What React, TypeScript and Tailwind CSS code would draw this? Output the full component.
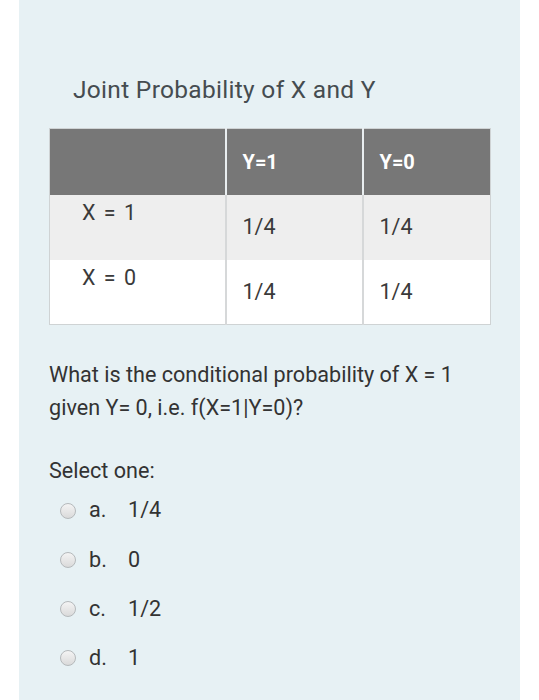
import React from "react";

const font = { fontFamily: "Roboto, 'Noto Sans', sans-serif" };

const rows = [
  { label: "X = 1", a: "1/4", b: "1/4", bg: "bg-[#eeeeee]" },
  { label: "X = 0", a: "1/4", b: "1/4", bg: "bg-white" },
];

const options = [
  { key: "a.", value: "1/4" },
  { key: "b.", value: "0" },
  { key: "c.", value: "1/2" },
  { key: "d.", value: "1" },
];

export default function App() {
  return (
    <div className="min-h-[700px] w-[539px] bg-white" style={font}>
      <div className="ml-[19px] w-[501px] min-h-[700px] bg-[#e7f1f4] px-[30px] pt-[73px]">
        {/* title */}
        <h1 className="ml-[24px] text-[24.5px] leading-[34px] tracking-[0.3px] text-[#454c50] font-normal">
          Joint Probability of X and Y
        </h1>

        {/* joint table */}
        <table className="mt-[21px] w-[442px] border-collapse border border-[#cfd3d4]">
          <thead>
            <tr className="h-[66px] bg-[#777777] text-[20px] text-white">
              <th className="w-[176px] border-r-2 border-[#e9eef0]"></th>
              <th className="w-[137px] border-r-2 border-[#e9eef0] pl-[16px] text-left font-bold">Y=1</th>
              <th className="pl-[16px] text-left font-bold">Y=0</th>
            </tr>
          </thead>
          <tbody className="text-[21.5px] text-[#3a3a3a]">
            {rows.map((r) => (
              <tr key={r.label} className={`h-[65px] ${r.bg}`}>
                <td className="border-r-2 border-[#d6d8d9] pl-[32px] pt-[2px] align-top [word-spacing:3px]">{r.label}</td>
                <td className="border-r-2 border-[#d6d8d9] pl-[16px] align-middle">{r.a}</td>
                <td className="pl-[16px] align-middle">{r.b}</td>
              </tr>
            ))}
          </tbody>
        </table>

        {/* question */}
        <p className="mt-[33px] text-[21.6px] leading-[33px] text-[#333333]">
          What is the conditional probability of X = 1
          <br />
          given Y= 0, i.e. f(X=1|Y=0)?
        </p>

        <div className="mt-[31px] text-[21.6px] leading-[32px] text-[#333333]">Select one:</div>

        <ul className="-mt-[1px] text-[21.6px] text-[#333333]">
          {options.map((o) => (
            <li key={o.key} className="flex h-[49.2px] items-center">
              <span className="ml-[11px] h-[16px] w-[16px] rounded-full border border-[#b5b9bb] bg-gradient-to-b from-[#f4f4f4] to-[#dadada]"></span>
              <span className="ml-[13px] w-[39px]">{o.key}</span>
              <span>{o.value}</span>
            </li>
          ))}
        </ul>
      </div>
    </div>
  );
}
